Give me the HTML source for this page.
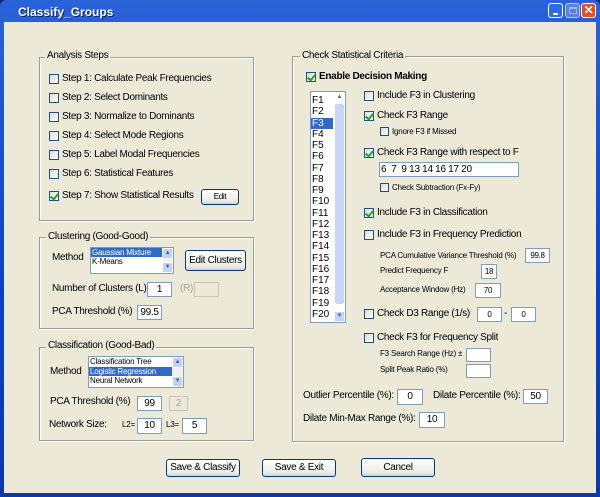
<!DOCTYPE html>
<html><head><meta charset="utf-8"><style>
*{box-sizing:border-box;margin:0;padding:0;white-space:nowrap}
body{width:600px;height:497px;overflow:hidden;background:#0a246a;font-family:"Liberation Sans",Arial,sans-serif;font-size:10px;letter-spacing:-0.3px;color:#000;position:relative}
.a{position:absolute}
#win{position:absolute;left:0;top:0;width:600px;height:497px;background:linear-gradient(#2a62d8,#0842c4 60%,#0a3aa8);border-radius:6px 6px 0 0}
#body{position:absolute;left:4px;top:22px;width:592px;height:471px;background:#ece9d8}
.fr{position:absolute;border:1px solid #a09c8c;box-shadow:inset 1px 1px 0 #fff,1px 1px 0 #fff}
.lg{position:absolute;background:#ece9d8;padding:0 2px;line-height:12px}
.cb{position:absolute;width:10px;height:10px;border:1px solid #1c5180;background:linear-gradient(135deg,#dcdcd6,#fff)}
.cb.c::after{content:"";position:absolute;left:2px;top:0px;width:3px;height:6px;border:solid #21a121;border-width:0 2px 2px 0;transform:rotate(40deg)}
.t{position:absolute;line-height:12px}
.s{font-size:8px;line-height:10px;letter-spacing:-0.2px}
.in{position:absolute;background:#fff;border:1px solid #7f9db9;text-align:center;line-height:13px;font-size:10px}
.gr{position:absolute;border:1px solid #c9c7ba;background:#ece9d8;color:#aca899;text-align:center;font-size:10px;line-height:14px}
.bt{position:absolute;border:1px solid #003c74;border-radius:3px;background:linear-gradient(#fff,#ecebe6 80%,#d6d0c5);text-align:center;font-size:10px}
.lb{position:absolute;background:#fff;border:1px solid #7f9db9;overflow:hidden}
.sb{position:absolute;right:0;top:0;bottom:0;width:11px;background:#f1f0ec}
.sa{position:absolute;left:0;width:11px;height:11px;background:#c1d3fb;border:1px solid #fff;color:#4d6185;font-size:6px;line-height:9px;text-align:center}
.sel{background:#316ac5;color:#fff}
</style></head><body>
<div id="win"></div>
<div class="a" style="left:18px;top:5px;color:#fff;font-weight:bold;font-size:12px;letter-spacing:0;text-shadow:1px 1px #0a1e6a">Classify_Groups</div>
<div class="a" style="left:548px;top:3px;width:15px;height:15px;border:1px solid #fff;border-radius:3px;background:#2f6ae8"><div style="position:absolute;left:4px;top:9px;width:5px;height:2px;background:#fff"></div></div>
<div class="a" style="left:565px;top:3px;width:15px;height:15px;border:1px solid #b8c8f0;border-radius:3px;background:#5a82d8"><div style="position:absolute;left:3px;top:3px;width:8px;height:7px;border:1px solid #9fb4e4;border-top-width:2px"></div></div>
<div class="a" style="left:581px;top:3px;width:15px;height:15px;border:1px solid #fff;border-radius:3px;background:#e0502a;color:#fff;font-weight:bold;font-size:12px;line-height:13px;text-align:center">✕</div>
<div id="body"></div>

<div class="fr" style="left:39px;top:57px;width:215px;height:164px"></div>
<div class="lg" style="left:45px;top:50px">Analysis Steps</div>
<div class="cb" style="left:49px;top:74px"></div><div class="t" style="left:62px;top:73px">Step 1: Calculate Peak Frequencies</div>
<div class="cb" style="left:49px;top:93px"></div><div class="t" style="left:62px;top:92px">Step 2: Select Dominants</div>
<div class="cb" style="left:49px;top:112px"></div><div class="t" style="left:62px;top:111px">Step 3: Normalize to Dominants</div>
<div class="cb" style="left:49px;top:131px"></div><div class="t" style="left:62px;top:130px">Step 4: Select Mode Regions</div>
<div class="cb" style="left:49px;top:150px"></div><div class="t" style="left:62px;top:149px">Step 5: Label Modal Frequencies</div>
<div class="cb" style="left:49px;top:169px"></div><div class="t" style="left:62px;top:168px">Step 6: Statistical Features</div>
<div class="cb c" style="left:49px;top:191px"></div><div class="t" style="left:62px;top:190px">Step 7: Show Statistical Results</div>
<div class="bt" style="left:201px;top:189px;width:38px;height:16px;font-size:8px;line-height:14px">Edit</div>

<div class="fr" style="left:39px;top:237px;width:215px;height:92px"></div>
<div class="lg" style="left:46px;top:231px">Clustering (Good-Good)</div>
<div class="t" style="left:52px;top:252px">Method</div>
<div class="lb" style="left:90px;top:247px;width:84px;height:27px;font-size:8px;line-height:9px;letter-spacing:-0.2px">
<div class="sel" style="margin-right:11px;padding-left:1px">Gaussian Mixture</div><div style="padding-left:1px">K-Means</div>
<div class="sb"><div class="sa" style="top:0">▲</div><div class="sa" style="bottom:0">▼</div></div></div>
<div class="bt" style="left:185px;top:250px;width:61px;height:21px;line-height:19px;font-size:10px">Edit Clusters</div>
<div class="t" style="left:52px;top:283px">Number of Clusters (L)</div>
<div class="in" style="left:147px;top:282px;width:25px;height:15px">1</div>
<div class="t" style="left:180px;top:283px;color:#aca899">(R)</div>
<div class="gr" style="left:194px;top:282px;width:25px;height:15px"></div>
<div class="t" style="left:52px;top:306px">PCA Threshold (%)</div>
<div class="in" style="left:137px;top:305px;width:25px;height:15px">99.5</div>

<div class="fr" style="left:39px;top:347px;width:215px;height:94px"></div>
<div class="lg" style="left:46px;top:340px">Classification (Good-Bad)</div>
<div class="t" style="left:50px;top:366px">Method</div>
<div class="lb" style="left:88px;top:356px;width:96px;height:32px;font-size:8px;line-height:9.5px;letter-spacing:-0.2px">
<div style="padding-left:1px">Classification Tree</div><div class="sel" style="margin-right:11px;padding-left:1px">Logistic Regression</div><div style="padding-left:1px">Neural Network</div>
<div class="sb"><div class="sa" style="top:0">▲</div><div class="sa" style="bottom:0">▼</div></div></div>
<div class="t" style="left:50px;top:396px">PCA Threshold (%)</div>
<div class="in" style="left:137px;top:396px;width:25px;height:15px">99</div>
<div class="gr" style="left:169px;top:396px;width:19px;height:15px">2</div>
<div class="t" style="left:49px;top:419px">Network Size:</div>
<div class="t s" style="left:122px;top:420px">L2=</div>
<div class="in" style="left:137px;top:418px;width:25px;height:16px">10</div>
<div class="t s" style="left:166px;top:420px">L3=</div>
<div class="in" style="left:182px;top:418px;width:25px;height:16px">5</div>

<div class="fr" style="left:292px;top:56px;width:272px;height:386px"></div>
<div class="lg" style="left:300px;top:50px">Check Statistical Criteria</div>
<div class="cb c" style="left:306px;top:72px"></div><div class="t" style="left:319px;top:71px;font-weight:bold">Enable Decision Making</div>
<div class="lb" style="left:310px;top:91px;width:36px;height:232px;font-size:10px;line-height:11.25px;padding-top:3px;letter-spacing:0">
<div style="padding-left:1px">F1</div><div style="padding-left:1px">F2</div><div class="sel" style="margin-right:12px;padding-left:1px">F3</div><div style="padding-left:1px">F4</div><div style="padding-left:1px">F5</div><div style="padding-left:1px">F6</div><div style="padding-left:1px">F7</div><div style="padding-left:1px">F8</div><div style="padding-left:1px">F9</div><div style="padding-left:1px">F10</div><div style="padding-left:1px">F11</div><div style="padding-left:1px">F12</div><div style="padding-left:1px">F13</div><div style="padding-left:1px">F14</div><div style="padding-left:1px">F15</div><div style="padding-left:1px">F16</div><div style="padding-left:1px">F17</div><div style="padding-left:1px">F18</div><div style="padding-left:1px">F19</div><div style="padding-left:1px">F20</div>
<div class="sb" style="background:#fff"><div class="sa" style="top:0;background:#fff;border-color:#fff">▲</div><div style="position:absolute;left:1px;top:12px;width:9px;height:200px;background:#c8d6f8;border-radius:2px"></div><div class="sa" style="bottom:0">▼</div></div></div>

<div class="cb" style="left:364px;top:91px"></div><div class="t" style="left:377px;top:90px">Include F3 in Clustering</div>
<div class="cb c" style="left:364px;top:111px"></div><div class="t" style="left:377px;top:110px">Check F3 Range</div>
<div class="cb" style="left:380px;top:127px;width:9px;height:9px"></div><div class="t s" style="left:392px;top:127px">Ignore F3 if Missed</div>
<div class="cb c" style="left:364px;top:148px"></div><div class="t" style="left:377px;top:147px">Check F3 Range with respect to F</div>
<div class="in" style="left:379px;top:162px;width:140px;height:15px;text-align:left;padding-left:1px">6 &nbsp;7 &nbsp;9 13 14 16 17 20</div>
<div class="cb" style="left:380px;top:183px;width:9px;height:9px"></div><div class="t s" style="left:392px;top:183px">Check Subtraction (Fx-Fy)</div>
<div class="cb c" style="left:364px;top:208px"></div><div class="t" style="left:377px;top:207px">Include F3 in Classification</div>
<div class="cb" style="left:364px;top:230px"></div><div class="t" style="left:377px;top:229px">Include F3 in Frequency Prediction</div>
<div class="t s" style="left:380px;top:251px">PCA Cumulative Variance Threshold (%)</div>
<div class="in" style="left:525px;top:248px;width:25px;height:15px;font-size:8px">99.8</div>
<div class="t s" style="left:380px;top:266px">Predict Frequency F</div>
<div class="in" style="left:481px;top:264px;width:16px;height:15px;font-size:8px">18</div>
<div class="t s" style="left:380px;top:285px">Acceptance Window (Hz)</div>
<div class="in" style="left:475px;top:283px;width:26px;height:15px;font-size:8px">70</div>
<div class="cb" style="left:364px;top:309px"></div><div class="t" style="left:377px;top:308px">Check D3 Range (1/s)</div>
<div class="in" style="left:477px;top:307px;width:25px;height:15px;font-size:8px">0</div>
<div class="t" style="left:504px;top:308px">-</div>
<div class="in" style="left:511px;top:307px;width:25px;height:15px;font-size:8px">0</div>
<div class="cb" style="left:364px;top:333px"></div><div class="t" style="left:377px;top:332px">Check F3 for Frequency Split</div>
<div class="t s" style="left:380px;top:349px">F3 Search Range (Hz) ±</div>
<div class="in" style="left:466px;top:348px;width:25px;height:14px"></div>
<div class="t s" style="left:380px;top:365px">Split Peak Ratio (%)</div>
<div class="in" style="left:466px;top:364px;width:25px;height:14px"></div>
<div class="t" style="left:303px;top:390px">Outlier Percentile (%):</div>
<div class="in" style="left:397px;top:389px;width:26px;height:16px">0</div>
<div class="t" style="left:433px;top:390px">Dilate Percentile (%):</div>
<div class="in" style="left:523px;top:389px;width:25px;height:15px">50</div>
<div class="t" style="left:303px;top:413px">Dilate Min-Max Range (%):</div>
<div class="in" style="left:419px;top:412px;width:26px;height:16px">10</div>

<div class="bt" style="left:166px;top:459px;width:74px;height:18px;line-height:16px">Save &amp; Classify</div>
<div class="bt" style="left:262px;top:459px;width:74px;height:18px;line-height:16px">Save &amp; Exit</div>
<div class="bt" style="left:361px;top:458px;width:74px;height:19px;line-height:17px">Cancel</div>
</body></html>
